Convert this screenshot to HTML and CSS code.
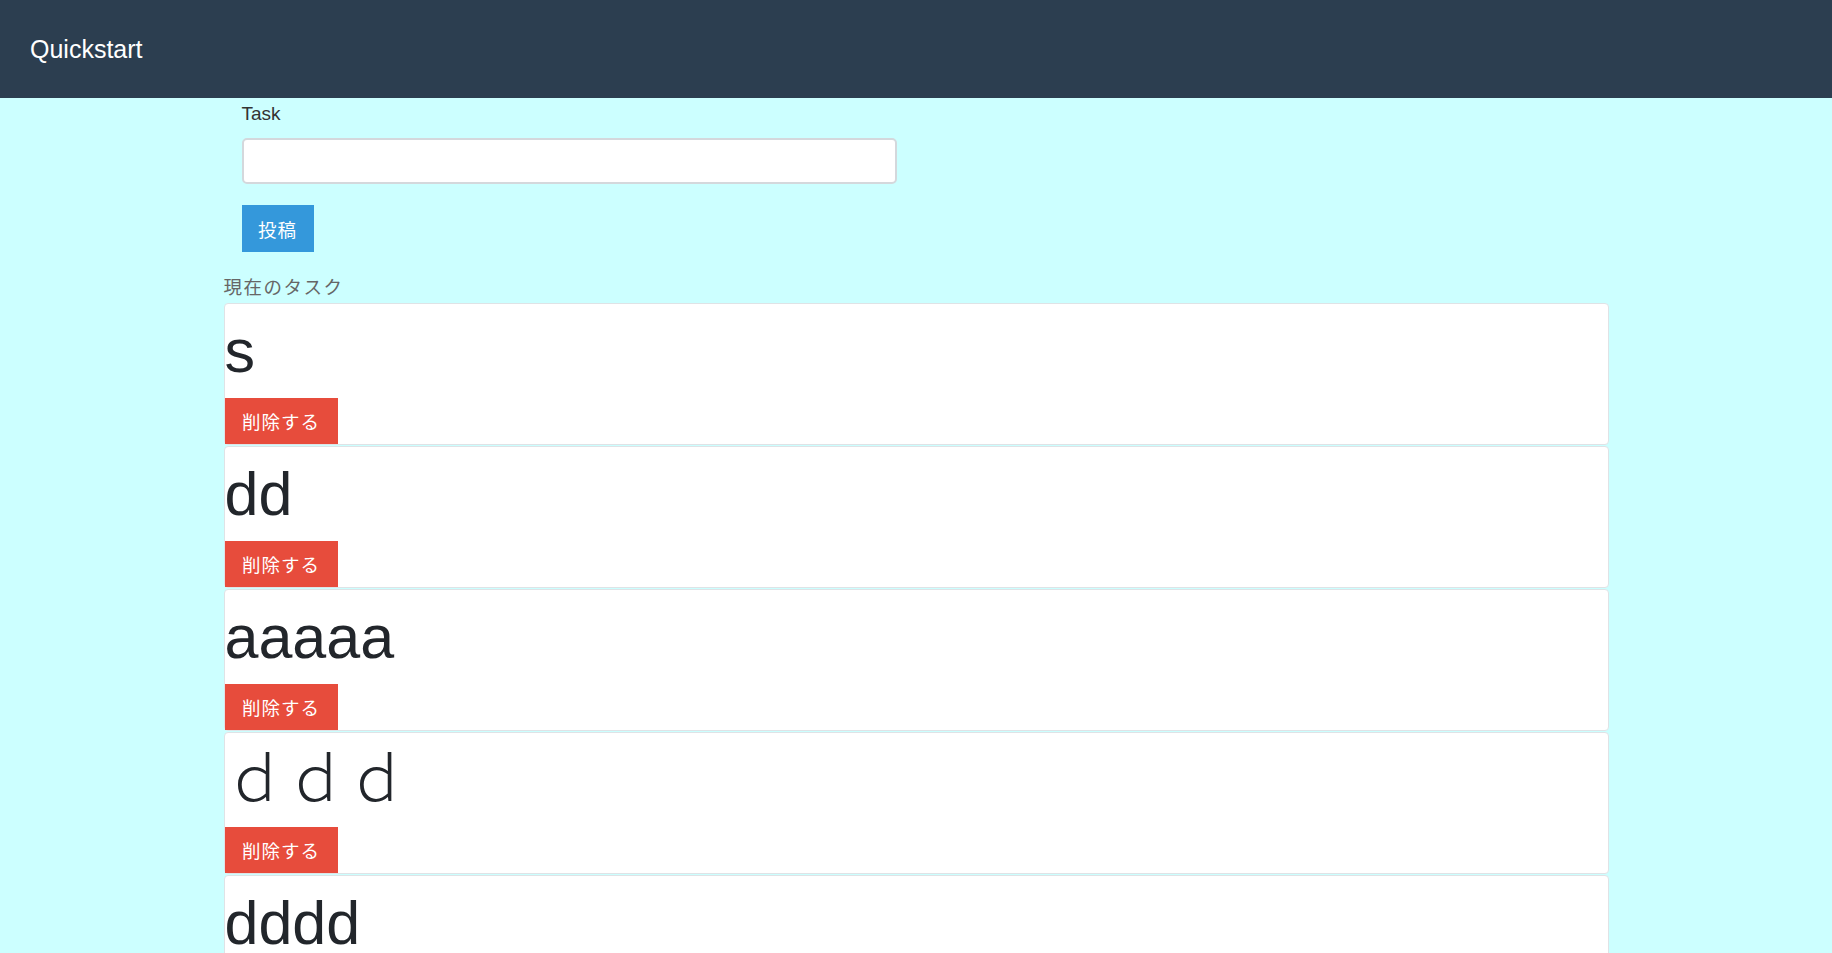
FILE: index.html
```html
<!DOCTYPE html>
<html lang="ja">
<head>
    <meta charset="utf-8">
    <title>Quickstart</title>
    <link rel="stylesheet" href="styles.css">
</head>
<body>
    <nav class="navbar">
        <a class="navbar-brand" href="#">Quickstart</a>
    </nav>

    <div class="container">
        <form class="task-form">
            <label for="task-name">Task</label>
            <input type="text" id="task-name" name="name">
            <button type="button" class="btn btn-post">投稿</button>
        </form>

        <div class="current-title">現在のタスク</div>

        <div class="task-list">
            <div class="task-card">
                <h1 class="task-name">s</h1>
                <button type="button" class="btn btn-delete">削除する</button>
            </div>
            <div class="task-card">
                <h1 class="task-name">dd</h1>
                <button type="button" class="btn btn-delete">削除する</button>
            </div>
            <div class="task-card">
                <h1 class="task-name">aaaaa</h1>
                <button type="button" class="btn btn-delete">削除する</button>
            </div>
            <div class="task-card">
                <h1 class="task-name">ｄｄｄ</h1>
                <button type="button" class="btn btn-delete">削除する</button>
            </div>
            <div class="task-card">
                <h1 class="task-name">dddd</h1>
                <button type="button" class="btn btn-delete">削除する</button>
            </div>
        </div>
    </div>
</body>
</html>
```

FILE: styles.css
```css
body {
    margin: 0;
    font-family: "Liberation Sans", Arial, "Noto Sans CJK JP", sans-serif;
    font-size: 18.5px;
    color: #333;
    background-color: #ccffff;
}
.navbar {
    height: 98px;
    background-color: #2c3e50;
    display: flex;
    align-items: center;
    padding-left: 30px;
}
.navbar-brand {
    color: #fff;
    font-size: 25px;
    text-decoration: none;
}
.container {
    width: 1385px;
    margin: 0 auto;
}
.task-form {
    display: flex;
    flex-direction: column;
    align-items: flex-start;
    padding-left: 18px;
    padding-top: 4px;
}
.task-form label {
    font-size: 19px;
    line-height: 24px;
    margin-bottom: 12px;
}
.task-form input {
    width: 655px;
    height: 46px;
    box-sizing: border-box;
    border: 2px solid #d4d8dc;
    border-radius: 5px;
    background: #fff;
    margin: 0 0 21px 0;
    font-size: 18px;
}
.btn {
    border: none;
    border-radius: 0;
    color: #fff;
    font-family: "Noto Sans CJK JP", sans-serif;
    font-size: 18.5px;
    letter-spacing: 1px;
    cursor: pointer;
}
.btn-post {
    width: 72px;
    height: 47px;
    padding: 0;
    background-color: #3498db;
}
.current-title {
    color: #666;
    font-family: "Noto Sans CJK JP", sans-serif;
    font-size: 18.5px;
    letter-spacing: 1.5px;
    line-height: 24px;
    margin-top: 22px;
    margin-bottom: 5px;
}
.task-card {
    background: #fff;
    border: 1px solid #dfe3e6;
    border-radius: 4px;
    margin-bottom: 1px;
}
.task-name {
    margin: 0;
    font-size: 61px;
    font-weight: 300;
    line-height: 94px;
    color: #22262b;
}
.btn-delete {
    display: block;
    width: 113px;
    height: 46px;
    padding: 0;
    background-color: #e74c3c;
}
```
